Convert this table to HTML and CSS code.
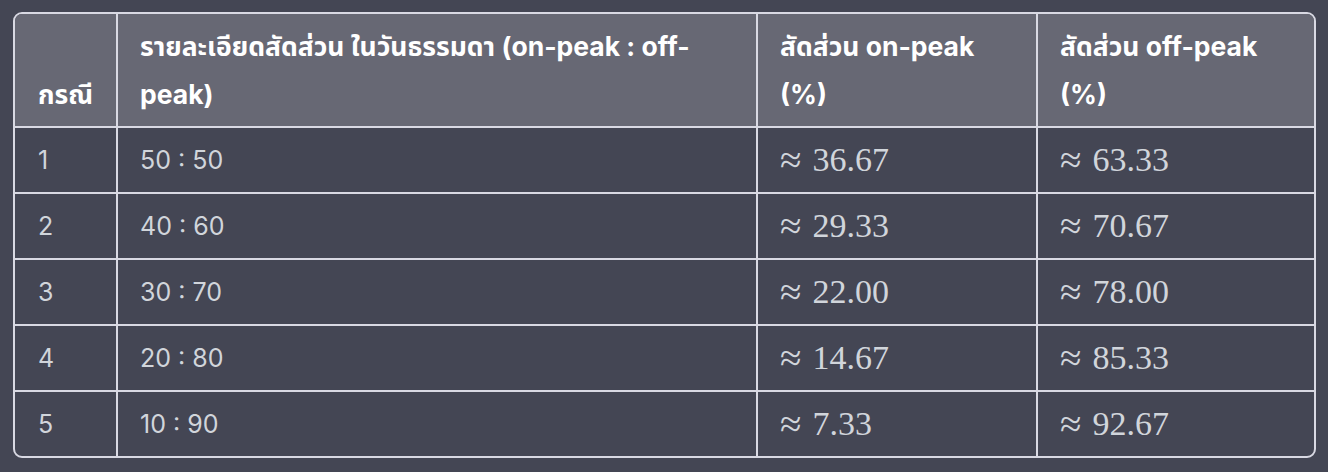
FILE: index.html
```html
<!DOCTYPE html>
<html lang="th">
<head>
<meta charset="utf-8">
<link rel="stylesheet" href="styles.css">
</head>
<body>
<div class="wrap">
<table class="tbl">
<colgroup>
<col class="c1"><col class="c2"><col class="c3"><col class="c4">
</colgroup>
<thead>
<tr>
<th>กรณี</th>
<th>รายละเอียดสัดส่วน ในวันธรรมดา (on-peak : off-peak)</th>
<th>สัดส่วน on-peak (%)</th>
<th>สัดส่วน off-peak (%)</th>
</tr>
</thead>
<tbody>
<tr><td>1</td><td>50 : 50</td><td class="m"><span class="ap">≈</span>36.67</td><td class="m"><span class="ap">≈</span>63.33</td></tr>
<tr><td>2</td><td>40 : 60</td><td class="m"><span class="ap">≈</span>29.33</td><td class="m"><span class="ap">≈</span>70.67</td></tr>
<tr><td>3</td><td>30 : 70</td><td class="m"><span class="ap">≈</span>22.00</td><td class="m"><span class="ap">≈</span>78.00</td></tr>
<tr><td>4</td><td>20 : 80</td><td class="m"><span class="ap">≈</span>14.67</td><td class="m"><span class="ap">≈</span>85.33</td></tr>
<tr><td>5</td><td>10 : 90</td><td class="m"><span class="ap">≈</span>7.33</td><td class="m"><span class="ap">≈</span>92.67</td></tr>
</tbody>
</table>
</div>
</body>
</html>
```
FILE: styles.css
```css
html, body {
  margin: 0;
  padding: 0;
  background: #444654;
}
body {
  font-family: Inter, "Noto Sans Thai", "Noto Sans", sans-serif;
  color: #d1d5db;
}
.wrap {
  padding: 12px 12px 0 13px;
}
.tbl {
  width: 1303px;
  border-collapse: separate;
  border-spacing: 0;
  border: 2px solid #d9d9e3;
  border-radius: 9px;
  overflow: hidden;
  table-layout: fixed;
}
.c1 { width: 101px; }
.c2 { width: 640px; }
.c3 { width: 280px; }
.c4 { width: 278px; }
th, td {
  box-sizing: border-box;
  text-align: left;
  padding: 0 22px 0 22px;
  border-left: 2px solid #d9d9e3;
  border-top: 2px solid #d9d9e3;
}
th:first-child, td:first-child {
  border-left: none;
  padding-left: 23px;
}
thead th {
  border-top: none;
  background: #676874;
  color: #ffffff;
  font-weight: 700;
  font-size: 26.5px;
  line-height: 48px;
  vertical-align: bottom;
  padding-top: 8px;
  padding-bottom: 8px;
  height: 112px;
}
td {
  font-size: 25px;
  height: 66px;
  line-height: 30px;
  vertical-align: middle;
}
td.m {
  font-family: "Liberation Serif", "DejaVu Serif", serif;
  font-size: 34px;
}
.ap {
  display: inline-block;
  font-size: 1.15em;
  line-height: 30px;
  margin-right: 0.28em;
  vertical-align: top;
}
```
